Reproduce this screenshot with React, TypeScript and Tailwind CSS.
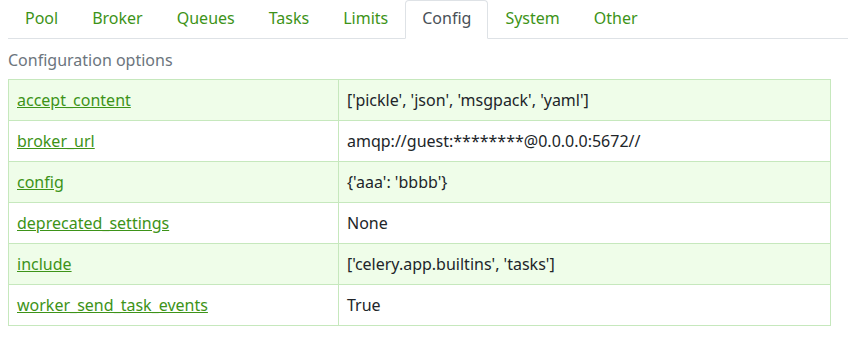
import * as React from "react";

const tabs = ["Pool", "Broker", "Queues", "Tasks", "Limits", "Config", "System", "Other"];

const options: [string, string][] = [
  ["accept_content", "['pickle', 'json', 'msgpack', 'yaml']"],
  ["broker_url", "amqp://guest:********@0.0.0.0:5672//"],
  ["config", "{'aaa': 'bbbb'}"],
  ["deprecated_settings", "None"],
  ["include", "['celery.app.builtins', 'tasks']"],
  ["worker_send_task_events", "True"],
];

export default function App() {
  return (
    <div
      className="h-[338px] w-[848px] overflow-hidden bg-white pl-2 text-[16px] leading-6 text-[#212529]"
      style={{ fontFamily: '"Noto Sans", "Open Sans", sans-serif' }}
    >
      {/* tab strip */}
      <ul className="flex h-[39px] border-b border-[#dee2e6]">
        {tabs.map((t) => {
          const active = t === "Config";
          return (
            <li key={t} className="-mb-px">
              <a
                href="#"
                className={
                  active
                    ? "block h-[39px] rounded-t border border-[#dee2e6] border-b-white bg-white px-4 pt-[5px] text-[#495057]"
                    : "block h-[39px] border border-transparent px-4 pt-[5px] text-[#3d9318]"
                }
              >
                {t}
              </a>
            </li>
          );
        })}
      </ul>

      <p className="mt-[9px] h-[31px] text-[#6c757d]">Configuration options</p>

      <table className="w-[823px] border-collapse">
        <tbody>
          {options.map(([key, value], i) => (
            <tr key={key} className={i % 2 === 0 ? "bg-[#effde9]" : "bg-white"}>
              <td className="h-[41px] w-[330px] border border-[#c6e8bd] px-2 align-middle">
                <a href="#" className="text-[#3d9318] underline">
                  {key}
                </a>
              </td>
              <td className="h-[41px] border border-[#c6e8bd] px-2 align-middle">{value}</td>
            </tr>
          ))}
        </tbody>
      </table>
    </div>
  );
}
